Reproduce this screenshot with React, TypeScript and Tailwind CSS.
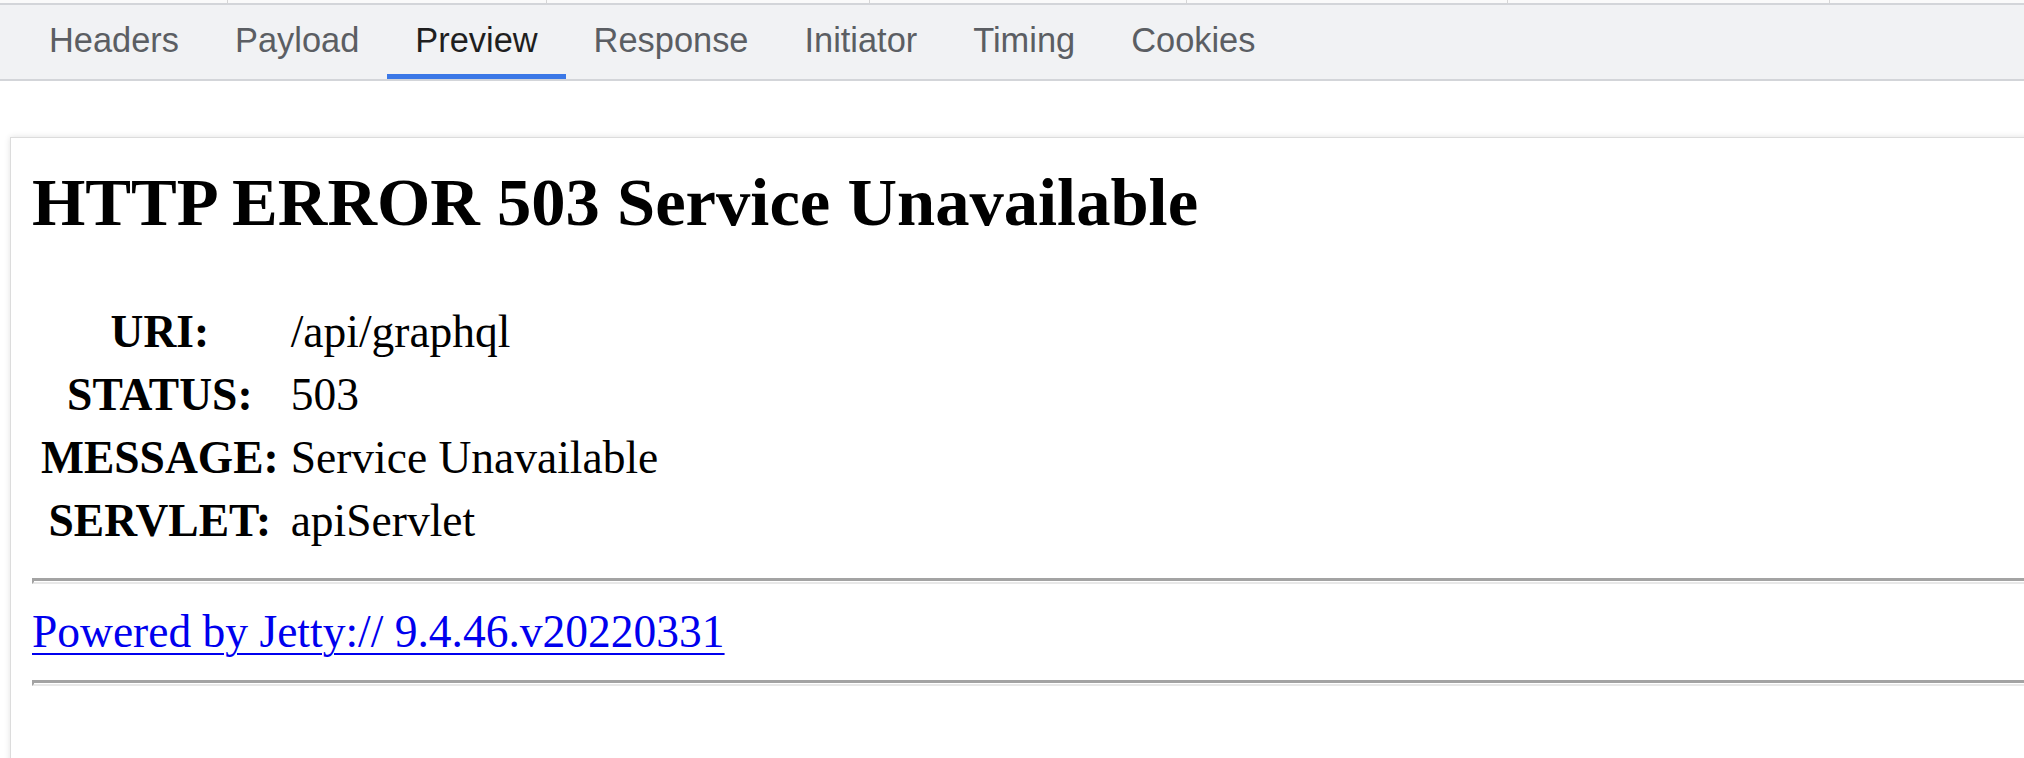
const tabs = ['Headers', 'Payload', 'Preview', 'Response', 'Initiator', 'Timing', 'Cookies'];

const rows: [string, string][] = [
  ['URI:', '/api/graphql'],
  ['STATUS:', '503'],
  ['MESSAGE:', 'Service Unavailable'],
  ['SERVLET:', 'apiServlet'],
];

function Hr() {
  return <div className="mt-[23px] h-[6px] border-t-[3px] border-l-[2px] border-b-[2px] border-t-[#a3a3a3] border-l-[#a3a3a3] border-b-[#e8e8e8]" />;
}

export default function App() {
  return (
    <div className="h-[758px] w-[2024px] overflow-hidden bg-white">
      {/* bottom edge of the request table above */}
      <div className="flex h-[3px] bg-[#fafafa]">
        <div className="w-[228px] border-r border-[#d6d6d6]" />
        <div className="w-[319px] border-r border-[#d6d6d6]" />
        <div className="w-[323px] border-r border-[#d6d6d6]" />
        <div className="w-[317px] border-r border-[#d6d6d6]" />
        <div className="w-[321px] border-r border-[#d6d6d6]" />
        <div className="w-[322px] border-r border-[#d6d6d6]" />
      </div>

      <div className="flex h-[78px] items-stretch border-t-2 border-b-2 border-[#d3d5d9] bg-[#f1f2f4] pl-[21px] font-['Liberation_Sans',Arial,sans-serif] text-[34.4px]">
        {tabs.map((tab) => (
          <div
            key={tab}
            className={
              tab === 'Preview'
                ? 'flex items-center border-b-[5px] border-[#3b78e7] px-[28px] pt-[3px] text-[#1f1f1f]'
                : 'flex items-center border-b-[5px] border-transparent px-[28px] pt-[3px] text-[#5b5e63]'
            }
          >
            {tab}
          </div>
        ))}
      </div>

      <div className="mt-[56px] -mr-[40px] ml-[10px] h-[700px] border-t border-l border-[#dcdcdc] bg-white pl-[21px] font-['Liberation_Serif','Times_New_Roman',serif] text-black shadow-[0_0_6px_rgba(0,0,0,0.12)]">
        <h2 className="mt-[25px] text-[68.6px] leading-[78px] font-bold">HTTP ERROR 503 Service Unavailable</h2>

        <table className="mt-[56px] border-separate border-spacing-[6px] text-[45.5px] leading-[51px]">
          <tbody>
            {rows.map(([label, value]) => (
              <tr key={label}>
                <th className="p-[3px] text-center font-bold">{label}</th>
                <td className="p-[3px] text-left">{value}</td>
              </tr>
            ))}
          </tbody>
        </table>

        <Hr />
        <div className="mt-[22px] text-[45.5px] leading-[52px]">
          <a href="#" className="text-[#0000ee] underline decoration-[2px] underline-offset-[6px]">
            Powered by Jetty:// 9.4.46.v20220331
          </a>
        </div>
        <div className="-mt-[1px]">
          <Hr />
        </div>
      </div>
    </div>
  );
}
